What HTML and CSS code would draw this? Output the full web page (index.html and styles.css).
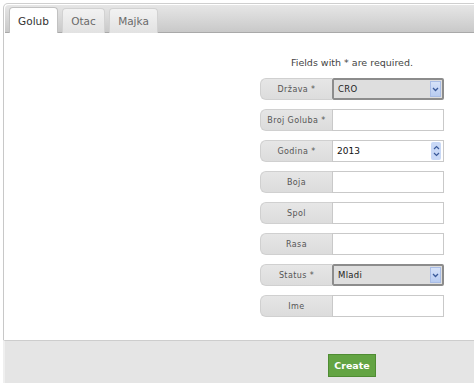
FILE: index.html
```html
<!DOCTYPE html>
<html>
<head>
<meta charset="utf-8">
<link rel="stylesheet" href="styles.css">
</head>
<body>
<div class="page">
  <div class="tabs">
    <div class="tabnav">
      <div class="tab active">Golub</div>
      <div class="tab">Otac</div>
      <div class="tab">Majka</div>
    </div>
    <div class="panel">
      <form class="form">
        <p class="note">Fields with * are required.</p>
        <div class="row">
          <label class="lbl">Država *</label>
          <div class="select"><span>CRO</span><span class="arrow"><svg width="7" height="5" viewBox="0 0 7 5"><path d="M1 1 L3.5 3.5 L6 1" fill="none" stroke="#3a5a9a" stroke-width="1.3"/></svg></span></div>
        </div>
        <div class="row">
          <label class="lbl">Broj Goluba *</label>
          <div class="input"></div>
        </div>
        <div class="row">
          <label class="lbl">Godina *</label>
          <div class="input num"><span>2013</span><span class="spin"><svg width="7" height="14" viewBox="0 0 7 14"><path d="M1 5 L3.5 2.5 L6 5" fill="none" stroke="#3a5a9a" stroke-width="1.2"/><path d="M1 9 L3.5 11.5 L6 9" fill="none" stroke="#3a5a9a" stroke-width="1.2"/></svg></span></div>
        </div>
        <div class="row">
          <label class="lbl">Boja</label>
          <div class="input"></div>
        </div>
        <div class="row">
          <label class="lbl">Spol</label>
          <div class="input"></div>
        </div>
        <div class="row">
          <label class="lbl">Rasa</label>
          <div class="input"></div>
        </div>
        <div class="row">
          <label class="lbl">Status *</label>
          <div class="select"><span>Mladi</span><span class="arrow"><svg width="7" height="5" viewBox="0 0 7 5"><path d="M1 1 L3.5 3.5 L6 1" fill="none" stroke="#3a5a9a" stroke-width="1.3"/></svg></span></div>
        </div>
        <div class="row">
          <label class="lbl">Ime</label>
          <div class="input"></div>
        </div>
      </form>
    </div>
  </div>
  <div class="footer">
    <div class="actions"><button class="btn" type="button">Create</button></div>
  </div>
</div>
</body>
</html>
```
FILE: styles.css
```css
html, body {
  margin: 0;
  padding: 0;
  background: #ffffff;
  font-family: "DejaVu Sans", Verdana, sans-serif;
}
.page {
  padding: 3px 0 3px 3px;
}
.tabs {
  border-top: 1px solid #cfcfcf;
  border-left: 1px solid #c8c8c8;
  border-radius: 5px 0 0 0;
  background: #ffffff;
  padding: 1px 0 0 0;
}
.tabnav {
  height: 28px;
  box-sizing: border-box;
  margin-left: 1px;
  padding-left: 4px;
  display: flex;
  align-items: flex-end;
  gap: 4px;
  background: linear-gradient(#e6e6e6, #c9c9c9);
  border-bottom: 1px solid #a9a9a9;
  border-radius: 4px 0 0 0;
}
.tab {
  height: 25px;
  box-sizing: border-box;
  margin-bottom: -1px;
  padding: 0;
  display: flex;
  align-items: center;
  justify-content: center;
  font-size: 10.5px;
  color: #6a6a6a;
  background: linear-gradient(#f2f2f2, #e2e2e2);
  border: 1px solid #d2d2d2;
  border-bottom: none;
  border-radius: 4px 4px 0 0;
}
.tab:nth-child(2) { width: 43px; }
.tab:nth-child(3) { width: 49px; }
.tab.active {
  width: 49px;
  color: #333333;
  background: #ffffff;
  border-color: #c2c2c2;
  height: 26px;
}
.panel {
  height: 307px;
  display: flex;
  justify-content: flex-end;
  padding-right: 30px;
}
.form {
  width: 184px;
  margin: 0;
  padding-top: 22px;
  display: flex;
  flex-direction: column;
  gap: 9px;
}
.note {
  margin: 0 0 -2px 0;
  padding-top: 2px;
  text-align: center;
  font-size: 9.5px;
  color: #444;
  height: 14px;
}
.row {
  display: flex;
  height: 22px;
}
.lbl {
  width: 72px;
  box-sizing: border-box;
  display: flex;
  align-items: center;
  justify-content: center;
  font-size: 8px;
  letter-spacing: 0.4px;
  color: #555;
  background: linear-gradient(#e6e6e6, #dcdcdc);
  border: 1px solid #d0d0d0;
  border-right: none;
  border-radius: 6px 0 0 6px;
}
.input {
  flex: 1;
  box-sizing: border-box;
  background: #fff;
  border: 1px solid #c9c9c9;
  display: flex;
  align-items: center;
  justify-content: space-between;
  padding-left: 4px;
  font-size: 9px;
  color: #111;
}
.input.num {
  padding-right: 2px;
}
.spin {
  width: 10px;
  height: 18px;
  background: #c8d8f6;
  border-radius: 2px;
  display: flex;
  align-items: center;
  justify-content: center;
}
.select {
  flex: 1;
  box-sizing: border-box;
  background: #dedede;
  border: 2px solid #8c8c8c;
  border-radius: 2px;
  display: flex;
  align-items: center;
  justify-content: space-between;
  padding: 0 1px 0 4px;
  font-size: 8.5px;
  letter-spacing: 0.3px;
  color: #222;
}
.arrow {
  width: 11px;
  height: 16px;
  background: linear-gradient(#d6e2f8, #b8ccf2);
  border: 1px solid #a9bde6;
  box-sizing: border-box;
  display: flex;
  align-items: center;
  justify-content: center;
}
.footer {
  height: 43px;
  box-sizing: border-box;
  background: #e5e5e5;
  border-top: 1px solid #cdcdcd;
  border-left: 2px solid #efefef;
  display: flex;
  justify-content: flex-end;
  padding-right: 30px;
}
.actions {
  width: 184px;
  display: flex;
  justify-content: center;
  padding-top: 13px;
}
.btn {
  width: 48px;
  height: 23px;
  background: #63a443;
  border: 1px solid #4f8c33;
  color: #ffffff;
  font-family: "DejaVu Sans", Verdana, sans-serif;
  font-weight: bold;
  font-size: 9.5px;
  padding: 0;
}
```
